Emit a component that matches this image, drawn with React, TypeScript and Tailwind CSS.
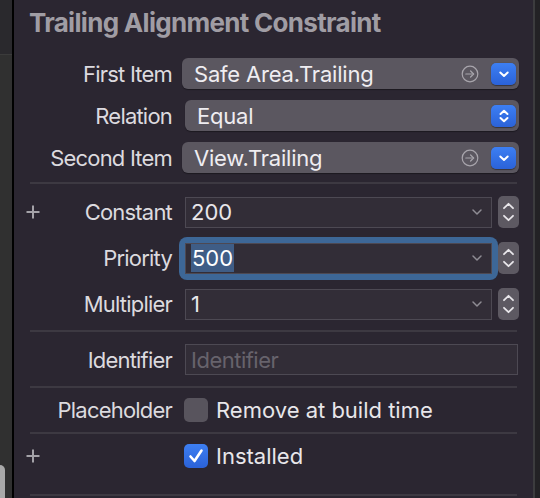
import React from "react";

const labelCls = "text-[22px] leading-none text-[#dcdadf] whitespace-nowrap tracking-[-0.8px]";

function CircleArrow() {
  return (
    <svg width="18" height="18" viewBox="0 0 18 18" className="shrink-0">
      <circle cx="9" cy="9" r="7.8" fill="none" stroke="#a8a5ac" strokeWidth="1.2" />
      <line x1="4.8" y1="9" x2="12.6" y2="9" stroke="#a8a5ac" strokeWidth="1.2" strokeLinecap="round" />
      <polyline points="9.6,6 12.6,9 9.6,12" fill="none" stroke="#a8a5ac" strokeWidth="1.2" strokeLinecap="round" strokeLinejoin="round" />
    </svg>
  );
}

function BlueButton({ updown }: { updown?: boolean }) {
  return (
    <div className="w-[25px] h-[22px] rounded-[5px] bg-gradient-to-b from-[#3d7ff3] to-[#2b62d8] flex items-center justify-center shrink-0 shadow-[0_0.5px_1px_rgba(0,0,0,0.4)]">
      {updown ? (
        <svg width="12" height="16" viewBox="0 0 12 16">
          <polyline points="2.5,6 6,2.7 9.5,6" fill="none" stroke="#ffffff" strokeWidth="2" strokeLinecap="round" strokeLinejoin="round" />
          <polyline points="2.5,10 6,13.3 9.5,10" fill="none" stroke="#ffffff" strokeWidth="2" strokeLinecap="round" strokeLinejoin="round" />
        </svg>
      ) : (
        <svg width="12" height="10" viewBox="0 0 12 10">
          <polyline points="2.3,3.5 6,7 9.7,3.5" fill="none" stroke="#ffffff" strokeWidth="2" strokeLinecap="round" strokeLinejoin="round" />
        </svg>
      )}
    </div>
  );
}

function Stepper() {
  return (
    <div className="ml-[6px] w-[21px] h-[32px] rounded-[5px] bg-[#5d5962] flex flex-col items-center justify-center gap-[4px] shrink-0">
      <svg width="13" height="8" viewBox="0 0 13 8">
        <polyline points="2,6.2 6.5,1.8 11,6.2" fill="none" stroke="#e9e7eb" strokeWidth="1.8" strokeLinecap="round" strokeLinejoin="round" />
      </svg>
      <svg width="13" height="8" viewBox="0 0 13 8">
        <polyline points="2,1.8 6.5,6.2 11,1.8" fill="none" stroke="#e9e7eb" strokeWidth="1.8" strokeLinecap="round" strokeLinejoin="round" />
      </svg>
    </div>
  );
}

function FieldChevron() {
  return (
    <svg width="12" height="8" viewBox="0 0 12 8" className="shrink-0 mr-[8px]">
      <polyline points="2,2 6,6 10,2" fill="none" stroke="#8f8c94" strokeWidth="1.5" strokeLinecap="round" strokeLinejoin="round" />
    </svg>
  );
}

function Plus() {
  return (
    <svg width="14" height="14" viewBox="0 0 14 14" className="shrink-0">
      <line x1="7" y1="0.5" x2="7" y2="13.5" stroke="#a4a2a8" strokeWidth="2" />
      <line x1="0.5" y1="7" x2="13.5" y2="7" stroke="#a4a2a8" strokeWidth="2" />
    </svg>
  );
}

function LabelCol({ text, plus }: { text?: string; plus?: boolean }) {
  return (
    <div className="w-[158px] shrink-0 flex items-center justify-between pl-[12px]">
      {plus ? <Plus /> : <span />}
      {text ? <span className={labelCls}>{text}</span> : null}
    </div>
  );
}

function Sep({ className }: { className: string }) {
  return <div className={`h-[2px] ml-[16px] mr-[16px] bg-[#3d3942] ${className}`} />;
}

function Popup({ label, value, ml, arrow, updown }: { label: string; value: string; ml: string; arrow?: boolean; updown?: boolean }) {
  return (
    <div className="flex items-center h-[31px]">
      <LabelCol text={label} />
      <div className={`${ml} mr-[14px] flex-1 h-[31px] rounded-[6px] bg-[#5b5760] flex items-center pl-[12px] pr-[3px] shadow-[0_1px_1px_rgba(0,0,0,0.35)]`}>
        <span className="flex-1 text-[22px] leading-none text-[#efedf1] whitespace-nowrap tracking-[-0.2px]">{value}</span>
        {arrow ? <div className="mr-[12px] flex"><CircleArrow /></div> : null}
        <BlueButton updown={updown} />
      </div>
    </div>
  );
}

function NumField({ label, value, plus, focused, className }: { label: string; value: string; plus?: boolean; focused?: boolean; className: string }) {
  const field = (
    <div className="w-[307px] h-[31px] bg-[#322d37] border border-[#4d4953] flex items-center pl-[5px]">
      {focused ? (
        <span className="flex-1 flex">
          <span className="bg-[#3f5d86] h-[28px] px-[1px] flex items-center text-[22px] leading-none text-white">{value}</span>
        </span>
      ) : (
        <span className="flex-1 text-[22px] leading-none text-[#e8e6ea]">{value}</span>
      )}
      <FieldChevron />
    </div>
  );
  return (
    <div className={`flex items-center h-[32px] ${className}`}>
      <LabelCol text={label} plus={plus} />
      <div className="ml-[13px] flex">
        {focused ? (
          <div className="-m-[6px] p-[6px] rounded-[8px] bg-[#3d6797]">{field}</div>
        ) : (
          field
        )}
      </div>
      <Stepper />
    </div>
  );
}

export default function App() {
  return (
    <div className="w-[540px] h-[498px] flex overflow-hidden font-['Inter','Noto_Sans',sans-serif] bg-[#2b2631]">
      {/* left strip */}
      <div className="w-[12px] shrink-0 flex flex-col">
        <div className="h-[54px] bg-[#2a292d]" />
        <div className="h-[1px] bg-[#3b3b3b]" />
        <div className="flex-1 bg-[#303030] flex flex-col justify-end">
          <div className="w-[5px] h-[33px] rounded-tr-[5px] bg-[#a9a9a9]" />
        </div>
      </div>
      <div className="w-[2px] shrink-0 bg-black" />
      {/* panel */}
      <div className="flex-1 flex flex-col bg-[#2b2631]">
        <div className="pl-[15px] pt-[10px] text-[26px] leading-[26px] font-bold text-[#a09da4] whitespace-nowrap tracking-[-0.7px]">
          Trailing Alignment Constraint
        </div>
        <div className="mt-[22px] flex flex-col gap-[11px]">
          <Popup label="First Item" value="Safe Area.Trailing" ml="ml-[10px]" arrow />
          <Popup label="Relation" value="Equal" ml="ml-[13px]" updown />
          <Popup label="Second Item" value="View.Trailing" ml="ml-[10px]" arrow />
        </div>
        <Sep className="mt-[9px]" />
        <NumField label="Constant" value="200" plus className="mt-[12px]" />
        <NumField label="Priority" value="500" focused className="mt-[14px]" />
        <NumField label="Multiplier" value="1" className="mt-[14px]" />
        <Sep className="mt-[10px]" />
        <div className="mt-[12px] flex items-center h-[31px]">
          <LabelCol text="Identifier" />
          <div className="ml-[13px] mr-[15px] flex-1 h-[31px] bg-[#322d37] border border-[#4d4953] flex items-center pl-[5px]">
            <span className="text-[22px] leading-none text-[#67636c] tracking-[-0.5px]">Identifier</span>
          </div>
        </div>
        <Sep className="mt-[11px]" />
        <div className="mt-[10px] flex items-center h-[24px]">
          <LabelCol text="Placeholder" />
          <div className="ml-[12px] w-[24px] h-[24px] rounded-[5px] bg-[#58545d] shrink-0" />
          <span className="ml-[8px] text-[22px] leading-none text-[#e8e6ea] whitespace-nowrap">Remove at build time</span>
        </div>
        <Sep className="mt-[10px]" />
        <div className="mt-[10px] flex items-center h-[24px]">
          <LabelCol plus />
          <div className="ml-[12px] w-[24px] h-[24px] rounded-[5px] bg-gradient-to-b from-[#3d7ff3] to-[#2b62d8] shrink-0 flex items-center justify-center">
            <svg width="18" height="18" viewBox="0 0 18 18">
              <polyline points="3.5,9.5 7.5,14 14.5,3.5" fill="none" stroke="#ffffff" strokeWidth="2.6" strokeLinecap="round" strokeLinejoin="round" />
            </svg>
          </div>
          <span className="ml-[8px] text-[22px] leading-none text-[#e8e6ea] whitespace-nowrap">Installed</span>
        </div>
        <Sep className="mt-[26px]" />
      </div>
      <div className="w-[2px] shrink-0 bg-[#3c3c3e]" />
      <div className="w-[5px] shrink-0 bg-[#232225]" />
    </div>
  );
}
